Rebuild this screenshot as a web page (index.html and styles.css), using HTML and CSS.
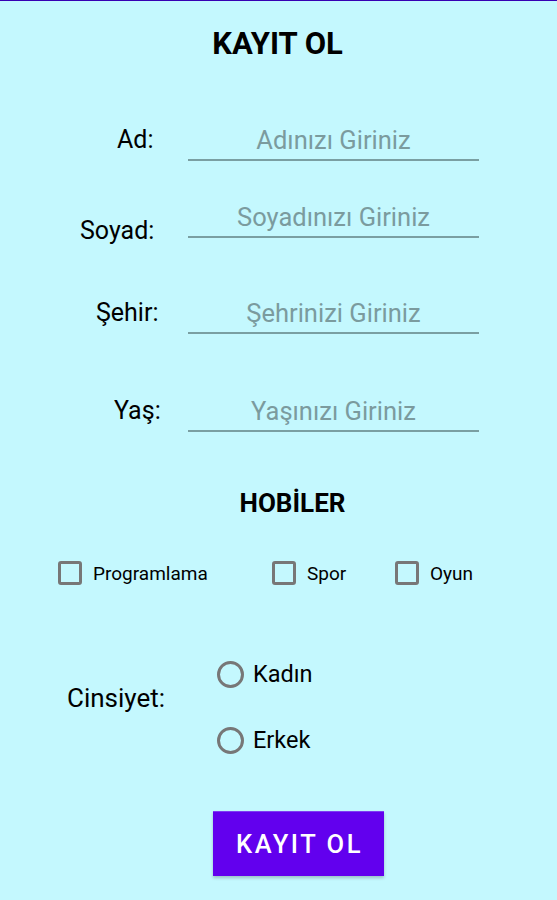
FILE: index.html
```html
<!DOCTYPE html>
<html lang="tr">
<head>
<meta charset="utf-8">
<title>Kayıt Ol</title>
<link rel="stylesheet" href="styles.css">
</head>
<body>
<div class="page">
  <h1 class="title">KAYIT OL</h1>

  <div class="row row--ad">
    <label class="label label--ad">Ad:</label>
    <input class="field" type="text" placeholder="Adınızı Giriniz">
  </div>
  <div class="row row--soyad">
    <label class="label label--soyad">Soyad:</label>
    <input class="field" type="text" placeholder="Soyadınızı Giriniz">
  </div>
  <div class="row row--sehir">
    <label class="label label--sehir">Şehir:</label>
    <input class="field" type="text" placeholder="Şehrinizi Giriniz">
  </div>
  <div class="row row--yas">
    <label class="label label--yas">Yaş:</label>
    <input class="field" type="text" placeholder="Yaşınızı Giriniz">
  </div>

  <h2 class="subtitle">HOBİLER</h2>

  <div class="hobbies">
    <div class="check"><span class="check__box"></span><span class="check__text">Programlama</span></div>
    <div class="check"><span class="check__box"></span><span class="check__text">Spor</span></div>
    <div class="check"><span class="check__box"></span><span class="check__text">Oyun</span></div>
  </div>

  <div class="gender">
    <div class="gender__label">Cinsiyet:</div>
    <div class="gender__options">
      <div class="radio"><span class="radio__circle"></span><span class="radio__text">Kadın</span></div>
      <div class="radio"><span class="radio__circle"></span><span class="radio__text">Erkek</span></div>
    </div>
  </div>

  <div class="actions">
    <button class="button" type="button">KAYIT OL</button>
  </div>
</div>
</body>
</html>
```

FILE: styles.css
```css
* { box-sizing: border-box; }

html, body {
  margin: 0;
  padding: 0;
}

body {
  background: #c4f8fe;
  font-family: Roboto, "Noto Sans", "Liberation Sans", sans-serif;
  color: #000;
}

.page {
  width: 557px;
  height: 900px;
  border-top: 1px solid #3700b3;
  display: flex;
  flex-direction: column;
}

.title {
  margin: 25px 0 0 0;
  padding-right: 2px;
  font-size: 31px;
  line-height: 36px;
  font-weight: 700;
  text-align: center;
}

.row {
  display: flex;
  align-items: flex-start;
}

.row--ad { margin-top: 59px; }
.row--soyad { margin-top: 37px; }
.row--sehir { margin-top: 44px; }
.row--yas { margin-top: 58px; }

.label {
  width: 188px;
  flex: none;
  font-size: 25px;
  line-height: 38px;
}

.label--ad { padding-left: 117px; }
.label--soyad { padding-left: 80px; margin-top: 14px; }
.label--sehir { padding-left: 96px; }
.label--yas { padding-left: 114px; }

.field {
  width: 291px;
  height: 40px;
  margin: 0;
  padding: 0;
  border: none;
  border-bottom: 2px solid #7a9fa2;
  background: transparent;
  font-family: inherit;
  font-size: 25.5px;
  text-align: center;
  color: #000;
  outline: none;
}

.field::placeholder {
  color: #7b9b9e;
  opacity: 1;
}

.subtitle {
  margin: 56px 0 0 0;
  padding-left: 28px;
  font-size: 26px;
  line-height: 30px;
  font-weight: 700;
  text-align: center;
}

.hobbies {
  margin-top: 43px;
  padding-left: 58px;
  display: grid;
  grid-template-columns: 214px 123px auto;
}

.check {
  display: flex;
  align-items: center;
  gap: 11px;
  height: 24px;
}

.check__box {
  width: 24px;
  height: 24px;
  border: 3px solid #777;
  border-radius: 3px;
  flex: none;
}

.check__text {
  font-size: 19px;
  line-height: 24px;
  padding-top: 2px;
}

.gender {
  margin-top: 75px;
  display: flex;
  align-items: flex-start;
}

.gender__label {
  width: 217px;
  padding-left: 67px;
  margin-top: 23px;
  font-size: 26px;
  line-height: 30px;
  flex: none;
}

.gender__options {
  display: flex;
  flex-direction: column;
  gap: 38px;
}

.radio {
  display: flex;
  align-items: center;
  gap: 9px;
  height: 28px;
}

.radio__circle {
  width: 27px;
  height: 27px;
  border: 3px solid #777;
  border-radius: 50%;
  flex: none;
}

.radio__text {
  font-size: 23.5px;
  line-height: 28px;
}

.actions {
  margin-top: 57px;
  padding-left: 213px;
}

.button {
  width: 171px;
  height: 65px;
  border: none;
  border-top: 1px solid #7f3cf3;
  background: #6200ee;
  color: #fff;
  font-family: inherit;
  font-size: 25.5px;
  font-weight: 500;
  letter-spacing: 0.1em;
  padding: 0 0 0 2px;
  box-shadow: 0 2px 3px rgba(0, 0, 0, 0.22);
  border-radius: 0;
}
```
